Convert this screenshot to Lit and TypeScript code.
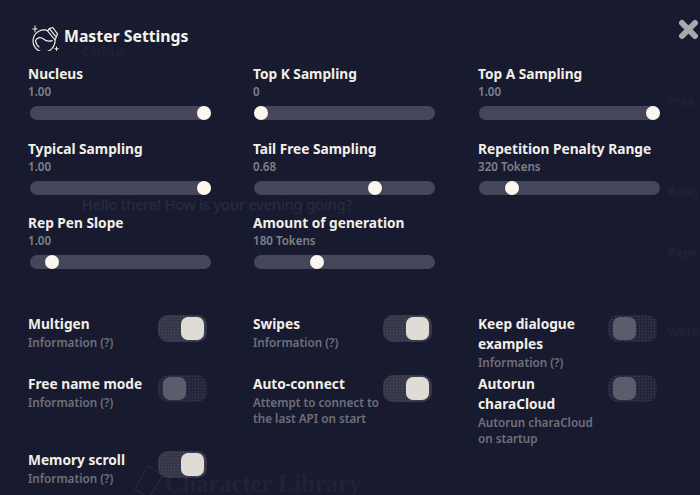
import { LitElement, html, css } from "lit";
import { customElement } from "lit/decorators.js";

const sliders = [
  ["Nucleus", "1.00", 1],
  ["Top K Sampling", "0", 0],
  ["Top A Sampling", "1.00", 1],
  ["Typical Sampling", "1.00", 1],
  ["Tail Free Sampling", "0.68", 0.68],
  ["Repetition Penalty Range", "320 Tokens", 0.155],
  ["Rep Pen Slope", "1.00", 0.09],
  ["Amount of generation", "180 Tokens", 0.335],
] as [string, string, number][];

const toggles = [
  ["Multigen", "Information (?)", true],
  ["Swipes", "Information (?)", true],
  ["Keep dialogue examples", "Information (?)", false],
  ["Free name mode", "Information (?)", false],
  ["Auto-connect", "Attempt to connect to the last API on start", true],
  ["Autorun charaCloud", "Autorun charaCloud on startup", false],
  ["Memory scroll", "Information (?)", true],
] as [string, string, boolean][];

@customElement("app-root")
export class AppRoot extends LitElement {
  static styles = css`
    :host {
      display: block;
      position: relative;
      width: 700px;
      height: 495px;
      overflow: hidden;
      background: #181b30;
      color: #f4f1ea;
      font-family: "Noto Sans", "Open Sans", sans-serif;
    }
    .ghost {
      position: absolute;
      color: #1f2238;
      white-space: nowrap;
    }
    .g-name { left: 82px; top: 46px; line-height: 10px; font-size: 15px; font-weight: 700; color: #1e2136; }
    .g-hello { left: 82px; top: 194px; font-size: 14.5px; color: #2a2d44; }
    .g-lib {
      left: 165px; top: 473px; line-height: 22px; font-size: 24.5px; font-weight: 700; color: #1f2238;
      font-family: "Liberation Serif", serif;
    }
    .g-card { left: 134px; top: 464px; width: 32px; height: 31px; }
    .g-r1 { left: 668px; top: 93px; font-size: 12px; font-weight: 700; }
    .g-r2 { left: 668px; top: 183px; font-size: 12px; font-weight: 700; }
    .g-r3 { left: 668px; top: 244px; font-size: 12px; font-weight: 700; }
    .g-r4 { left: 668px; top: 323px; font-size: 12px; font-weight: 700; }
    .content {
      position: relative;
      display: flex;
      flex-direction: column;
      padding: 23px 0 0 28px;
    }
    header {
      display: flex;
      align-items: center;
      gap: 3px;
      height: 26px;
      padding-left: 3px;
    }
    header svg { width: 30px; height: 30px; flex: none; }
    h1 {
      margin: 0;
      font-size: 15.8px;
      line-height: 20px;
      font-weight: 700;
      color: #f6f3ea;
    }
    .close {
      position: absolute;
      left: 678px;
      top: 19px;
      width: 21px;
      height: 21px;
    }
    .sliders {
      display: grid;
      grid-template-columns: repeat(3, 225px);
      grid-auto-rows: 74.5px;
      margin-top: 15px;
    }
    .name {
      font-size: 13.7px;
      line-height: 20px;
      font-weight: 700;
      color: #f2efe8;
    }
    .sub {
      font-size: 11.7px;
      line-height: 16.5px;
      font-weight: 600;
      color: #6f6f7b;
    }
    .slider .sub {
      font-size: 11.6px;
      font-weight: 600;
      line-height: 15px;
      margin-bottom: 7.4px;
      color: #80808a;
    }
    .track {
      position: relative;
      width: 181px;
      height: 14px;
      margin-left: 2px;
      border-radius: 7px;
      background: #45465a;
    }
    .slider:nth-child(3n + 2) .track,
    .slider:nth-child(3n) .track { margin-left: 1px; }
    .thumb {
      position: absolute;
      top: 0;
      width: 14px;
      height: 14px;
      border-radius: 50%;
      background: #fbf7ef;
    }
    .toggles {
      display: grid;
      grid-template-columns: repeat(3, 225px);
      row-gap: 3.5px;
      margin-top: 26px;
    }
    .toggle {
      display: grid;
      grid-template-columns: 130px 49px;
      align-items: start;
      width: 179px;
    }
    .switch {
      display: flex;
      align-items: center;
      width: 49px;
      height: 27px;
      padding: 0 3px 0 5px;
      box-sizing: border-box;
      border-radius: 10px;
      background-color: #363849;
      background-image: radial-gradient(#4a4b5c 0.7px, transparent 0.9px);
      background-size: 3px 3px;
      margin-top: 1px;
    }
    .switch.on { justify-content: flex-end; }
    .knob {
      width: 23px;
      height: 23px;
      border-radius: 7px;
      background-color: #dfdcd6;
    }
    .switch.off { background-color: #24263b; background-image: radial-gradient(#3e4053 0.7px, transparent 0.9px); }
    .switch.off .knob { background-color: #5c5d6c; }
  `;

  render() {
    return html`
      <div class="ghost g-name">Chloe</div>
      <div class="ghost g-hello">Hello there! How is your evening going?</div>
      <svg class="ghost g-card" viewBox="0 0 32 31" fill="none" stroke="#25283e" stroke-width="1.3">
        <path d="M14 2 L29 11 L15 34 L1 25 Z" />
      </svg>
      <div class="ghost g-lib">Character Library</div>
      <div class="ghost g-r1">Pres</div>
      <div class="ghost g-r2">Rang</div>
      <div class="ghost g-r3">Repe</div>
      <div class="ghost g-r4">Work</div>

      <div class="content">
        <header>
          <svg viewBox="0 0 30 30" fill="none" stroke="#f0eee6" stroke-width="1.15" stroke-linecap="round" stroke-linejoin="round">
            <path d="M17 9.7 A11 11 0 1 0 24 19" />
            <path d="M16.5 9.8 L18.3 7.6 L21.8 6.5 L26.5 12.8 L25.5 15.5 L24 19 Z" />
            <path d="M18.3 7.6 L24.8 15.6" />
            <path d="M4.6 19.5 C6.5 16 10 15.8 12.5 18 C15 20.2 18 20.6 21.2 19.6" />
            <path d="M4.6 19.5 C4.8 22 6 24.5 8 26" />
            <path d="M4 4.8 L4 11 M1.8 8 L6.2 8" stroke-width="1" />
            <path d="M25.5 26 L25.5 29.5 M23.7 27.8 L27.3 27.8" stroke-width="1" />
          </svg>
          <h1>Master Settings</h1>
        </header>

        <div class="sliders">
          ${sliders.map(
            ([n, v, p]) => html`
              <div class="slider">
                <div class="name">${n}</div>
                <div class="sub">${v}</div>
                <div class="track">
                  <div class="thumb" style="left:${(p * 167).toFixed(1)}px"></div>
                </div>
              </div>
            `
          )}
        </div>

        <div class="toggles">
          ${toggles.map(
            ([n, d, on]) => html`
              <div class="toggle">
                <div class="text">
                  <div class="name">${n}</div>
                  <div class="sub">${d}</div>
                </div>
                <div class="switch ${on ? "on" : "off"}"><div class="knob"></div></div>
              </div>
            `
          )}
        </div>
      </div>

      <svg class="close" viewBox="0 0 21 21" aria-hidden="true">
        <path d="M4 4 L17 17 M17 4 L4 17" stroke="#a9a9ad" stroke-width="6" stroke-linecap="round" fill="none" />
      </svg>
    `;
  }
}
